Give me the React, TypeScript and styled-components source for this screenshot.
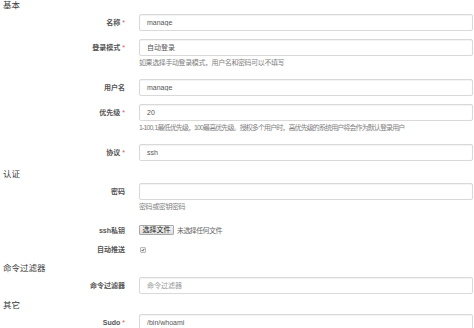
import React from "react";
import styled, { createGlobalStyle } from "styled-components";

const Global = createGlobalStyle`
  html, body { margin: 0; padding: 0; background: #fff; }
  body {
    font-family: "Liberation Sans", "Noto Sans CJK SC", Arial, sans-serif;
    color: #333;
    width: 474px;
    overflow: hidden;
  }
  * { box-sizing: border-box; }
`;

const Page = styled.div`
  display: flex;
  flex-direction: column;
  width: 474px;
`;

const Legend = styled.div<{ $after?: number }>`
  font-size: 8.5px;
  line-height: 11px;
  height: 11px;
  padding-left: 3px;
  color: #3a3a3a;
  margin-bottom: ${(p) => (p.$after ?? 3)}px;
`;

const Group = styled.div<{ $mb?: number }>`
  display: grid;
  grid-template-columns: 132px 1fr;
  margin-bottom: ${(p) => (p.$mb ?? 7.5)}px;
`;

const Label = styled.div<{ $h?: number }>`
  text-align: right;
  padding-right: 7px;
  font-size: 7px;
  font-weight: bold;
  color: #555;
  height: ${(p) => p.$h ?? 17}px;
  line-height: ${(p) => p.$h ?? 17}px;
  white-space: nowrap;
`;

const Req = styled.span`
  color: #d9534f;
  margin-left: 2px;
  font-weight: normal;
`;

const Control = styled.div`
  padding-left: 7px;
  padding-right: 1px;
  display: flex;
  flex-direction: column;
`;

const Input = styled.input`
  display: block;
  width: 100%;
  height: 17px;
  padding: 0 7px;
  margin: 0;
  font-family: "Liberation Sans", "Noto Sans CJK SC", Arial, sans-serif;
  font-size: 7px;
  color: #555;
  background: #fff;
  border: 1px solid #d9d9d9;
  border-radius: 2px;
  box-shadow: inset 0 1px 1px rgba(0, 0, 0, 0.05);
  outline: none;
  &::placeholder { color: #999; }
`;

const Select = styled.select`
  display: block;
  width: 100%;
  height: 17px;
  padding: 0 7px;
  margin: 0;
  font-family: "Liberation Sans", "Noto Sans CJK SC", Arial, sans-serif;
  font-size: 7px;
  color: #555;
  background: #fff;
  border: 1px solid #d9d9d9;
  border-radius: 2px;
  box-shadow: inset 0 1px 1px rgba(0, 0, 0, 0.05);
  appearance: none;
  outline: none;
`;

const Help = styled.div<{ $spacing?: number }>`
  margin-top: 2px;
  margin-bottom: 4px;
  font-size: 7px;
  letter-spacing: ${(p) => p.$spacing ?? -0.4}px;
  line-height: 10px;
  color: #808080;
  white-space: nowrap;
`;

const FileRow = styled.div`
  display: flex;
  align-items: center;
  height: 13px;
  gap: 3px;
`;

const FileButton = styled.span`
  display: inline-block;
  height: 10px;
  line-height: 8px;
  padding: 0 2.5px;
  font-size: 7px;
  color: #222;
  background: linear-gradient(#f3f3f3, #dedede);
  border: 1px solid #a8a8a8;
  border-radius: 1px;
  white-space: nowrap;
`;

const FileText = styled.span`
  font-size: 7px;
  letter-spacing: -0.6px;
  color: #666;
  white-space: nowrap;
`;

const CheckRow = styled.div`
  display: flex;
  align-items: center;
  height: 12px;
`;

const CheckBox = styled.span`
  display: inline-flex;
  align-items: center;
  justify-content: center;
  width: 6px;
  height: 6px;
  margin-left: 1px;
  background: #f2f2f2;
  border: 0.5px solid #bbb;
  border-radius: 1px;
`;

const Check = () => (
  <CheckBox>
    <svg width="6" height="6" viewBox="0 0 6 6">
      <path d="M1 3.2 L2.4 4.6 L5 1.3" stroke="#222" strokeWidth="1.1" fill="none" />
    </svg>
  </CheckBox>
);

export default function App() {
  return (
    <Page>
      <Global />
      <Legend>基本</Legend>
      <Group>
        <Label>名称<Req>*</Req></Label>
        <Control>
          <Input defaultValue="manage" />
        </Control>
      </Group>
      <Group>
        <Label>登录模式<Req>*</Req></Label>
        <Control>
          <Select defaultValue="auto">
            <option value="auto">自动登录</option>
          </Select>
          <Help>如果选择手动登录模式，用户名和密码可以不填写</Help>
        </Control>
      </Group>
      <Group>
        <Label>用户名</Label>
        <Control>
          <Input defaultValue="manage" />
        </Control>
      </Group>
      <Group>
        <Label>优先级<Req>*</Req></Label>
        <Control>
          <Input defaultValue="20" />
          <Help $spacing={-0.9}>1-100, 1最低优先级，100最高优先级。授权多个用户时，高优先级的系统用户将会作为默认登录用户</Help>
        </Control>
      </Group>
      <Group>
        <Label>协议<Req>*</Req></Label>
        <Control>
          <Input defaultValue="ssh" />
        </Control>
      </Group>

      <Legend $after={3.5}>认证</Legend>
      <Group>
        <Label>密码</Label>
        <Control>
          <Input type="password" />
          <Help>密码或密钥密码</Help>
        </Control>
      </Group>
      <Group>
        <Label $h={13}>ssh私钥</Label>
        <Control>
          <FileRow>
            <FileButton>选择文件</FileButton>
            <FileText>未选择任何文件</FileText>
          </FileRow>
        </Control>
      </Group>
      <Group $mb={6.5}>
        <Label $h={12}>自动推送</Label>
        <Control>
          <CheckRow>
            <Check />
          </CheckRow>
        </Control>
      </Group>

      <Legend $after={3.5}>命令过滤器</Legend>
      <Group $mb={6}>
        <Label>命令过滤器</Label>
        <Control>
          <Input placeholder="命令过滤器" />
        </Control>
      </Group>

      <Legend $after={2.5}>其它</Legend>
      <Group>
        <Label>Sudo<Req>*</Req></Label>
        <Control>
          <Input defaultValue="/bin/whoami" />
        </Control>
      </Group>
    </Page>
  );
}
